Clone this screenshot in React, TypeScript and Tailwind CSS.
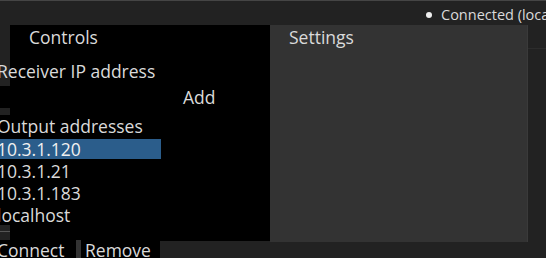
import React from "react";

const outputs = ["10.3.1.120", "10.3.1.21", "10.3.1.183", "localhost"];

export default function App() {
  return (
    <div
      className="w-[546px] h-[258px] overflow-hidden bg-[#222222] border-t border-[#454545] text-[#dadada] flex flex-col"
      style={{ fontFamily: "'Open Sans', Lato, sans-serif" }}
    >
      {/* Top bar */}
      <div className="h-[24px] shrink-0 flex items-center pl-[426px] pt-[4px] whitespace-nowrap text-[14.5px]">
        <span className="shrink-0 w-[6px] h-[6px] rounded-full bg-[#eeeeee] mr-[9px]" />
        <span className="shrink-0">Connected (localhost)</span>
      </div>

      <div className="flex pl-[10px]">
        {/* Controls */}
        <div className="w-[260px] h-[216px] bg-black flex flex-col text-[17.5px] leading-[22px]">
          <div className="h-[26px] pl-[19px] pt-[1px] flex items-center">Controls</div>
          <div className="-ml-[13px] flex flex-col">
            <div className="mt-[12px] h-[22px] whitespace-nowrap">Receiver IP address</div>
            <div className="mt-[4px] h-[22px] bg-black pl-[186px]">Add</div>
            <div className="mt-[7px] h-[22px] w-[172px] bg-black whitespace-nowrap">Output addresses</div>
            <div className="flex flex-col w-[164px] bg-black">
              {outputs.map((o, i) => (
                <div
                  key={o}
                  className={
                    i === 0
                      ? "h-[20px] mt-[2px] bg-[#2b5d8b] text-[#f0f0f0] leading-[20px]"
                      : "h-[22px] pt-[1px]"
                  }
                >
                  {o}
                </div>
              ))}
            </div>
            <div className="mt-[6px] h-[1px] w-[13px] bg-[#555555]" />
            <div className="mt-[8px] flex w-[163px] h-[24px] bg-black whitespace-nowrap leading-[20px]">
              <span className="w-[79px]">Connect</span>
              <span className="w-[5px] bg-[#333333]" />
              <span className="pl-[4px]">Remove</span>
            </div>
          </div>
        </div>

        {/* Settings */}
        <div className="w-[258px] h-[217px] bg-[#333333] border-r border-[#3a3a3a] text-[17.5px] leading-[22px]">
          <div className="h-[24px] pl-[19px] flex items-center">Settings</div>
        </div>

        <div className="flex-1 pt-[23px]">
          <div className="h-[1px] bg-[#2c2c2c]" />
        </div>
      </div>
    </div>
  );
}
